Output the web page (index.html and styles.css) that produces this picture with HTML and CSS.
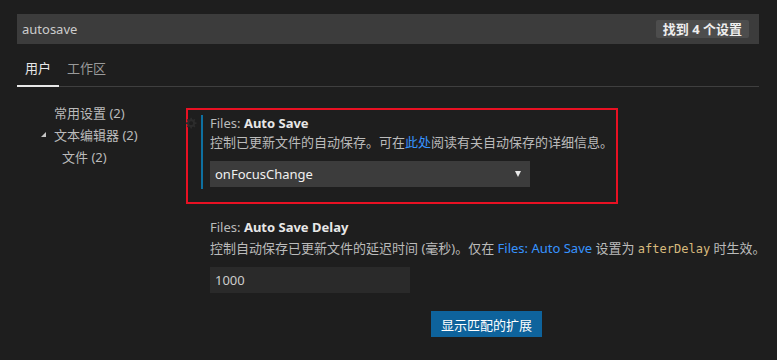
FILE: index.html
```html
<!DOCTYPE html>
<html lang="zh-CN">
<head>
    <meta charset="UTF-8">
    <title>设置</title>
    <link rel="stylesheet" href="styles.css">
</head>
<body>
    <div class="header">
        <div class="search-box">
            <span class="search-text">autosave</span>
            <span class="count-badge">找到 4 个设置</span>
        </div>
        <div class="tabs">
            <span class="tab active">用户</span>
            <span class="tab">工作区</span>
        </div>
    </div>

    <div class="main">
        <div class="tree">
            <div class="tree-item">常用设置 (2)</div>
            <div class="tree-item"><span class="twistie"></span>文本编辑器 (2)</div>
            <div class="tree-item child">文件 (2)</div>
        </div>

        <div class="settings">
            <div class="setting highlighted">
                <svg class="gear" width="12" height="12" viewBox="0 0 16 16">
                    <path fill="#2c2c2c" d="M9.1 1l.4 2 1.4.6 1.7-1.1 1.3 1.3-1.1 1.7.6 1.4 2 .4v1.8l-2 .4-.6 1.4 1.1 1.7-1.3 1.3-1.7-1.1-1.4.6-.4 2H7.3l-.4-2-1.4-.6-1.7 1.1-1.3-1.3 1.1-1.7-.6-1.4-2-.4V7.3l2-.4.6-1.4-1.1-1.7 1.3-1.3 1.7 1.1 1.4-.6.4-2zM8.2 5.6a2.6 2.6 0 1 0 0 5.2 2.6 2.6 0 0 0 0-5.2z"/>
                </svg>
                <div class="setting-body focused">
                    <div class="setting-title"><span class="category">Files: </span>Auto Save</div>
                    <div class="setting-desc">控制已更新文件的自动保存。可在<span class="link">此处</span>阅读有关自动保存的详细信息。</div>
                    <div class="select-box">
                        <span>onFocusChange</span>
                        <span class="arrow"></span>
                    </div>
                </div>
            </div>

            <div class="setting second">
                <div class="setting-body">
                    <div class="setting-title"><span class="category">Files: </span>Auto Save Delay</div>
                    <div class="setting-desc">控制自动保存已更新文件的延迟时间 (毫秒)。仅在 <span class="link">Files: Auto Save</span> 设置为 <code>afterDelay</code> 时生效。</div>
                    <div class="number-box">1000</div>
                </div>
            </div>

            <div class="actions">
                <button class="primary-button">显示匹配的扩展</button>
            </div>
        </div>
    </div>
</body>
</html>
```

FILE: styles.css
```css
body {
    margin: 0;
    padding: 0;
    background-color: #1e1e1e;
    color: #cccccc;
    font-family: "Segoe UI", "Noto Sans", "Noto Sans CJK SC", sans-serif;
    font-size: 13px;
    width: 777px;
    height: 360px;
    overflow: hidden;
}
.header {
    padding: 14px 18px 0 17px;
}
.search-box {
    display: flex;
    align-items: center;
    justify-content: space-between;
    height: 30px;
    background-color: #3c3c3c;
    padding: 0 10px 0 5px;
}
.search-text {
    color: #cccccc;
}
.count-badge {
    background-color: #4d4d4d;
    color: #eeeeee;
    font-weight: bold;
    padding: 0 7px;
    height: 18px;
    line-height: 18px;
    border-radius: 2px;
}
.tabs {
    display: flex;
    border-bottom: 1px solid #3f3f3f;
    height: 42px;
}
.tab {
    color: #9a9a9a;
    padding: 0 8px;
    line-height: 36px;
    margin-top: 6px;
}
.tab.active {
    color: #e7e7e7;
    border-bottom: 2px solid #e7e7e7;
    margin-bottom: -1px;
}
.main {
    display: flex;
    padding-top: 15px;
}
.tree {
    width: 186px;
    padding-left: 54px;
    box-sizing: border-box;
    color: #bbbbbb;
}
.tree-item {
    height: 22px;
    line-height: 22px;
    position: relative;
}
.tree-item.child {
    padding-left: 8px;
}
.twistie {
    position: absolute;
    left: -13px;
    top: 8px;
    width: 0;
    height: 0;
    border-left: 5px solid transparent;
    border-bottom: 5px solid #c5c5c5;
}
.settings {
    flex: 1;
    padding-top: 6px;
}
.setting {
    position: relative;
    width: 432px;
    box-sizing: border-box;
    padding: 5px 0 13px 13px;
    border: 2px solid transparent;
}
.setting.highlighted {
    border-color: #e81123;
}
.setting.second {
    margin-top: 7px;
}
.gear {
    position: absolute;
    left: -3px;
    top: 7px;
}
.setting-body {
    padding: 0 0 2px 7px;
    border-left: 2px solid transparent;
}
.setting-body.focused {
    border-left-color: #0e70a0;
}
.setting-title {
    font-weight: bold;
    color: #e7e7e7;
    line-height: 16px;
}
.second .setting-title {
    margin-top: 1px;
    margin-bottom: 2px;
}
.category {
    font-weight: normal;
    color: #bbbbbb;
}
.setting-desc {
    line-height: 22px;
    color: #bbbbbb;
    white-space: nowrap;
}
.link {
    color: #3794ff;
}
code {
    font-family: "DejaVu Sans Mono", monospace;
    font-size: 12px;
    color: #d7ba7d;
}
.select-box {
    display: flex;
    justify-content: space-between;
    align-items: center;
    width: 320px;
    height: 26px;
    margin-top: 8px;
    padding: 0 8px 0 5px;
    box-sizing: border-box;
    background-color: #3c3c3c;
    color: #f0f0f0;
}
.arrow {
    width: 0;
    height: 0;
    border-left: 3px solid transparent;
    border-right: 3px solid transparent;
    border-top: 6px solid #e8e8e8;
    margin-right: 1px;
}
.number-box {
    width: 200px;
    height: 26px;
    line-height: 26px;
    margin-top: 7px;
    padding-left: 5px;
    box-sizing: border-box;
    background-color: #2a2a2a;
    color: #cccccc;
}
.actions {
    display: flex;
    padding: 1px 0 0 245px;
}
.primary-button {
    font-family: inherit;
    font-size: 13px;
    background-color: #0e639c;
    color: #ffffff;
    border: none;
    height: 26px;
    padding: 0 10px;
}
```
